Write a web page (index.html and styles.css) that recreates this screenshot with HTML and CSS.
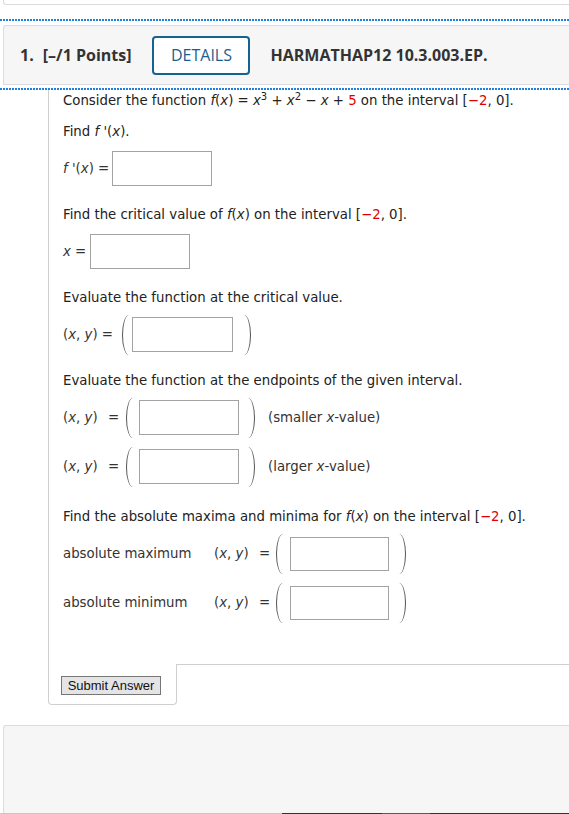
FILE: index.html
```html
<!DOCTYPE html>
<html>
    <head>
        <link rel="stylesheet" href="styles.css">
        <title>HARMATHAP12 10.3.003.EP.</title>
    </head>
    <body>
        <div class="prev-box"></div>

        <div class="question">
            <div class="focus-ring">
                <div class="q-header">
                    <span class="q-num">1.</span>
                    <span class="q-points">[&ndash;/1 Points]</span>
                    <button class="details-btn">DETAILS</button>
                    <span class="q-code">HARMATHAP12 10.3.003.EP.</span>
                </div>
            </div>

            <div class="q-body">
                <p class="q-text">Consider the function <i>f</i>(<i>x</i>) = <i>x</i><sup>3</sup> + <i>x</i><sup>2</sup> &minus; <i>x</i> + <span class="red">5</span> on the interval [<span class="red">&minus;2</span>, 0].</p>
                <p class="q-text">Find <i>f</i> '(<i>x</i>).</p>
                <div class="answer-row">
                    <span class="label label-fprime"><i>f</i> '(<i>x</i>) =</span>
                    <input class="ans" type="text">
                </div>

                <p class="q-text">Find the critical value of <i>f</i>(<i>x</i>) on the interval [<span class="red">&minus;2</span>, 0].</p>
                <div class="answer-row">
                    <span class="label label-x"><i>x</i> =</span>
                    <input class="ans" type="text">
                </div>

                <p class="q-text">Evaluate the function at the critical value.</p>
                <div class="answer-row">
                    <span class="label label-xy">(<i>x</i>, <i>y</i>) =</span>
                    <span class="paren open"></span>
                    <input class="ans ans-crit" type="text">
                    <span class="paren close close-crit"></span>
                </div>

                <p class="q-text">Evaluate the function at the endpoints of the given interval.</p>
                <div class="answer-row">
                    <span class="label label-pair">(<i>x</i>, <i>y</i>)</span>
                    <span class="label label-eq">=</span>
                    <span class="paren open open-end"></span>
                    <input class="ans" type="text">
                    <span class="paren close close-end"></span>
                    <span class="note">(smaller <i>x</i>-value)</span>
                </div>
                <div class="answer-row">
                    <span class="label label-pair">(<i>x</i>, <i>y</i>)</span>
                    <span class="label label-eq">=</span>
                    <span class="paren open open-end"></span>
                    <input class="ans" type="text">
                    <span class="paren close close-end"></span>
                    <span class="note">(larger <i>x</i>-value)</span>
                </div>

                <p class="q-text q-text-wide">Find the absolute maxima and minima for <i>f</i>(<i>x</i>) on the interval [<span class="red">&minus;2</span>, 0].</p>
                <div class="answer-row">
                    <span class="label label-name">absolute maximum</span>
                    <span class="label label-pair-m">(<i>x</i>, <i>y</i>)</span>
                    <span class="label label-eq-m">=</span>
                    <span class="paren open open-m"></span>
                    <input class="ans ans-m" type="text">
                    <span class="paren close close-m"></span>
                </div>
                <div class="answer-row">
                    <span class="label label-name">absolute minimum</span>
                    <span class="label label-pair-m">(<i>x</i>, <i>y</i>)</span>
                    <span class="label label-eq-m">=</span>
                    <span class="paren open open-m"></span>
                    <input class="ans ans-m" type="text">
                    <span class="paren close close-m"></span>
                </div>
            </div>

            <div class="q-footer">
                <div class="submit-cell">
                    <button class="submit-btn">Submit Answer</button>
                </div>
                <div class="footer-fill"></div>
            </div>
        </div>

        <div class="next-box"></div>
        <div class="bottom-strip"></div>
    </body>
</html>
```

FILE: styles.css
```css
body {
    margin: 0;
    color: #222;
    background-color: #fff;
    font-family: "DejaVu Sans", Verdana, sans-serif;
    font-size: 13.3px;
    overflow: hidden;
}
.prev-box {
    height: 4px;
    margin-left: 3px;
    border: 1px solid #dcdcdc;
    border-top: none;
    border-right: none;
    border-bottom-left-radius: 3px;
}
.focus-ring {
    margin-top: 14px;
    padding: 6px 0 5px;
    background:
        repeating-linear-gradient(90deg, #1f80e0 0 2px, transparent 2px 3px) top left / 100% 2px no-repeat,
        repeating-linear-gradient(90deg, #1f80e0 0 2px, transparent 2px 3px) bottom left / 100% 2px no-repeat;
}
.q-header {
    display: flex;
    align-items: center;
    height: 58px;
    margin-left: 3px;
    padding-left: 16px;
    border: 1px solid #dcdcdc;
    border-right: none;
    border-top-left-radius: 3px;
    background-color: #f6f6f6;
    color: #333;
    font-family: "Open Sans", sans-serif;
    font-size: 16px;
    font-weight: bold;
}
.q-num {
    margin-right: 9px;
}
.details-btn {
    width: 98px;
    height: 39px;
    margin-left: 21px;
    padding: 0;
    border: 2px solid #16638f;
    border-radius: 4px;
    background-color: #fff;
    color: #1b5e8e;
    font-family: "Open Sans", sans-serif;
    font-size: 16px;
    font-weight: 500;
    cursor: pointer;
}
.q-code {
    margin-left: 20px;
}
.q-body {
    margin-left: 48px;
    padding: 2px 0 44px 14px;
    border-left: 1px solid #cfcfcf;
}
.q-text {
    margin: 0;
    line-height: 18px;
}
.q-text + .q-text {
    margin-top: 13px;
}
.answer-row + .q-text {
    margin-top: 20px;
}
.answer-row + .q-text-wide {
    margin-top: 24px;
}
.q-text + .answer-row {
    margin-top: 10px;
}
.answer-row + .answer-row {
    margin-top: 14px;
}
sup {
    font-size: 10px;
    line-height: 0;
}
.red {
    color: #e00000;
}
.answer-row {
    display: flex;
    align-items: center;
    height: 35px;
}
.label {
    flex: none;
    color: #333;
    white-space: nowrap;
}
.label-fprime { width: 49px; }
.label-x { width: 27px; }
.label-xy { width: 59px; }
.label-pair { width: 45px; }
.label-eq { width: 18px; }
.label-name { width: 151px; }
.label-pair-m { width: 45px; }
.label-eq-m { width: 17px; }
.ans {
    box-sizing: border-box;
    width: 100px;
    height: 35px;
    margin: 0;
    border: 1px solid #a3a3a3;
    background-color: #fff;
    flex: none;
}
.ans-crit { width: 101px; }
.ans-m { width: 99px; height: 34px; }
.paren {
    box-sizing: border-box;
    flex: none;
    width: 7px;
    height: 40px;
    margin: -3px 0;
}
.paren.open {
    margin-right: 3px;
    border-left: 1.5px solid #555;
    border-radius: 7px 0 0 7px / 20px 0 0 20px;
}
.paren.close {
    border-right: 1.5px solid #555;
    border-radius: 0 7px 7px 0 / 0 20px 20px 0;
}
.open-end { margin-right: 6px !important; }
.open-m { margin-right: 7px !important; }
.close-crit { margin-left: 11px; }
.close-end { margin-left: 9px; }
.close-m { margin-left: 10px; }
.note {
    margin-left: 13px;
    color: #333;
    white-space: nowrap;
}
.q-footer {
    display: flex;
    margin-left: 48px;
}
.submit-cell {
    box-sizing: border-box;
    width: 129px;
    padding: 12px 0 9px 12px;
    border: 1px solid #cfcfcf;
    border-top: none;
    border-radius: 0 0 4px 4px;
}
.footer-fill {
    flex: 1;
    border-top: 1px solid #cfcfcf;
}
.submit-btn {
    display: block;
    width: 100px;
    height: 19px;
    padding: 0;
    border: 1px solid #767676;
    background-color: #e4e4e4;
    color: #111;
    font-family: "Liberation Sans", Arial, sans-serif;
    font-size: 13px;
}
.next-box {
    height: 87px;
    margin: 20px 0 0 3px;
    border: 1px solid #dcdcdc;
    border-right: none;
    border-bottom: none;
    border-top-left-radius: 3px;
    background-color: #f6f6f6;
}
.bottom-strip {
    height: 3px;
    background: linear-gradient(90deg, #c8c8c8 0 282px, #333 282px 382px, #b33434 382px 430px, #333 430px);
}
```
